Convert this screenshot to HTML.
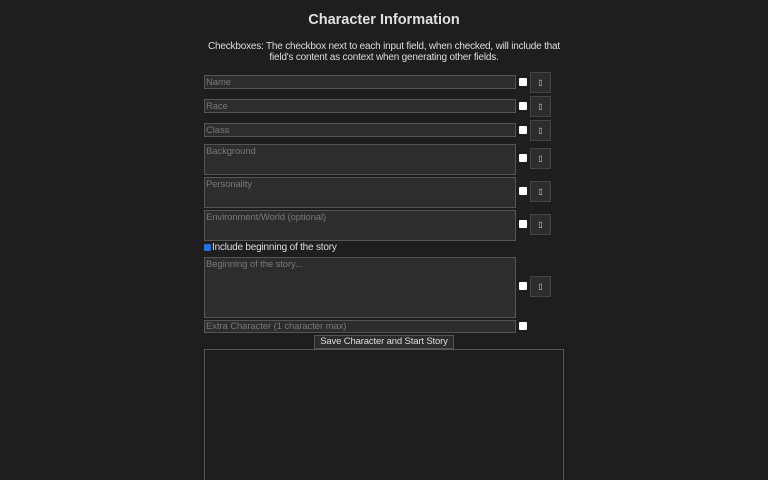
<!DOCTYPE html>
<html style="overflow:hidden;height:480px"><head><style>
body{margin:0;width:768px;height:480px;background:#1e1e1e;font-family:"Liberation Sans",sans-serif;color:#ddd;position:relative;overflow:hidden}
.a{position:absolute;white-space:nowrap}
.f{position:absolute;left:204px;width:312px;background:#2d2d2d;border:1px solid #555;color:#777;font-size:9.5px;padding:1px 1px 0;box-sizing:border-box;line-height:12px;white-space:nowrap;letter-spacing:-0.1px}
.cb{position:absolute;left:519px;width:8px;height:8px;background:#fff;border-radius:1px}
.b{position:absolute;left:530px;width:21px;height:21px;background:#2d2d2d;border:1px solid #444;box-sizing:border-box;color:#ccc;font-size:8px;text-align:center;line-height:19px}
</style></head><body>
<div class="a" style="left:0;width:768px;top:12px;text-align:center;font-weight:bold;font-size:14.5px;color:#e0e0e0">Character Information</div>
<div class="a" style="left:150px;width:468px;top:41px;text-align:center;font-size:10px;line-height:11px;color:#ddd;letter-spacing:-0.2px">Checkboxes: The checkbox next to each input field, when checked, will include that<br>field's content as context when generating other fields.</div>
<div class="f" style="top:75px;height:14px">Name</div><div class="cb" style="top:78px"></div><div class="b" style="top:72px">▯</div>
<div class="f" style="top:99px;height:14px">Race</div><div class="cb" style="top:102px"></div><div class="b" style="top:96px">▯</div>
<div class="f" style="top:123px;height:14px">Class</div><div class="cb" style="top:126px"></div><div class="b" style="top:120px">▯</div>
<div class="f" style="top:144px;height:31px">Background</div><div class="cb" style="top:154px"></div><div class="b" style="top:148px">▯</div>
<div class="f" style="top:177px;height:31px">Personality</div><div class="cb" style="top:187px"></div><div class="b" style="top:181px">▯</div>
<div class="f" style="top:210px;height:31px">Environment/World (optional)</div><div class="cb" style="top:220px"></div><div class="b" style="top:214px">▯</div>
<div class="a" style="left:204px;top:244px;width:7px;height:7px;background:#1a73e8;border-radius:1px"></div>
<div class="a" style="left:212px;top:242px;font-size:10px;color:#ddd;letter-spacing:-0.2px">Include beginning of the story</div>
<div class="f" style="top:257px;height:61px">Beginning of the story...</div><div class="cb" style="top:282px"></div><div class="b" style="top:276px">▯</div>
<div class="f" style="top:320px;height:13px;padding-top:0">Extra Character (1 character max)</div><div class="cb" style="top:322px"></div>
<div class="a" style="left:314px;top:335px;width:140px;height:14px;background:#2d2d2d;border:1px solid #555;box-sizing:border-box;font-size:9.5px;line-height:12px;text-align:center;color:#ddd;letter-spacing:-0.15px">Save Character and Start Story</div>
<div class="a" style="left:204px;top:349px;width:360px;height:140px;border:1px solid #555;box-sizing:border-box;background:#1e1e1e"></div>
</body></html>
